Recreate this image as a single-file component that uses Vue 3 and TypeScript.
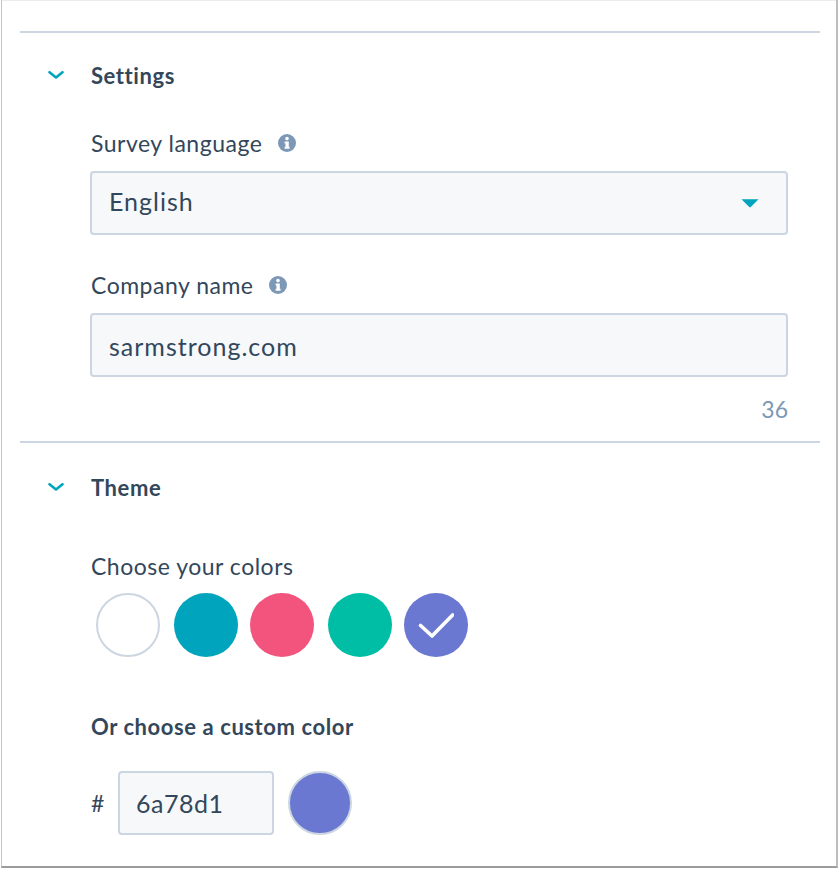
<script setup lang="ts">
const swatches: { color: string; outlined?: boolean; selected?: boolean }[] = [
  { color: '#ffffff', outlined: true },
  { color: '#00a4bd' },
  { color: '#f2547d' },
  { color: '#00bda5' },
  { color: '#6a78d1', selected: true },
]
</script>

<template>
  <div class="window">
    <section class="section first">
      <header class="head">
        <svg class="chevron" viewBox="0 0 16 8" width="16" height="8"><path d="M1.5 1.2 8 6.4l6.5-5.2" fill="none" stroke="#00a4bd" stroke-width="2.6" stroke-linecap="round" stroke-linejoin="round"/></svg>
        <span class="title">Settings</span>
      </header>
      <div class="body">
        <div class="label">
          <span>Survey language</span>
          <svg class="info" viewBox="0 0 18 18" width="18" height="18"><circle cx="9" cy="9" r="9" fill="#7c98b6"/><circle cx="9" cy="4.6" r="1.8" fill="#fff"/><path d="M6.6 7.4H10.8V12.8H11.6V14.8H6.6V12.8H7.5V9.4H6.6Z" fill="#fff"/></svg>
        </div>
        <div class="field select">
          <span class="select-value">English</span>
          <svg class="caret" viewBox="0 0 18 9" width="18" height="9"><path d="M0.5 0.2H17.5L10 7.8Q9 8.8 8 7.8Z" fill="#00a4bd"/></svg>
        </div>
        <div class="label second">
          <span>Company name</span>
          <svg class="info" viewBox="0 0 18 18" width="18" height="18"><circle cx="9" cy="9" r="9" fill="#7c98b6"/><circle cx="9" cy="4.6" r="1.8" fill="#fff"/><path d="M6.6 7.4H10.8V12.8H11.6V14.8H6.6V12.8H7.5V9.4H6.6Z" fill="#fff"/></svg>
        </div>
        <div class="field company"><span>sarmstrong.com</span></div>
        <div class="count">36</div>
      </div>
    </section>

    <section class="section theme">
      <header class="head">
        <svg class="chevron" viewBox="0 0 16 8" width="16" height="8"><path d="M1.5 1.2 8 6.4l6.5-5.2" fill="none" stroke="#00a4bd" stroke-width="2.6" stroke-linecap="round" stroke-linejoin="round"/></svg>
        <span class="title">Theme</span>
      </header>
      <div class="body">
        <div class="label colors-label">Choose your colors</div>
        <div class="swatches">
          <div
            v-for="s in swatches"
            :key="s.color"
            class="swatch"
            :class="{ outlined: s.outlined }"
            :style="{ backgroundColor: s.color }"
          >
            <svg v-if="s.selected" viewBox="0 0 36 26" width="36" height="26"><path d="M2.6 13.5 14 24 34.6 3" fill="none" stroke="#fff" stroke-width="3.6" stroke-linecap="round" stroke-linejoin="round"/></svg>
          </div>
        </div>
        <div class="label custom">Or choose a custom color</div>
        <div class="custom-row">
          <span class="hash">#</span>
          <div class="field hex">6a78d1</div>
          <div class="preview"></div>
        </div>
      </div>
    </section>
  </div>
</template>

<style>
html, body { margin: 0; background: #fff; }
</style>

<style scoped>
.window {
  box-sizing: border-box;
  width: 837px;
  height: 868px;
  margin-left: 1px;
  padding: 31px 16px 0 18px;
  border-left: 1px solid #c4c4c4;
  border-right: 2px solid #bdbdbd;
  border-bottom: 2px solid #9c9c9c;
  box-shadow: inset 0 1px 0 #ececec;
  font-family: Lato, "Open Sans", sans-serif;
  font-size: 23px;
  letter-spacing: 0.5px;
  color: #33475b;
  background: #fff;
}
.section {
  border-top: 2px solid #cbd6e2;
}
.first {
  height: 408px;
}
.head {
  display: flex;
  align-items: center;
  height: 84px;
  padding-left: 28px;
}
.theme .head {
  height: 88px;
}
.chevron {
  width: 16px;
}
.title {
  margin-left: 27px;
  font-size: 22px;
  letter-spacing: 0.58px;
  font-weight: 700;
}
.body {
  padding-left: 70px;
  width: 698px;
}
.label {
  display: flex;
  align-items: center;
  gap: 16px;
  height: 28px;
  padding-left: 1px;
}
.first .label:first-child {
  margin-top: 12px;
}
.second {
  margin-top: 36px;
}
.field {
  box-sizing: border-box;
  height: 64px;
  margin-top: 14px;
  padding: 0 17px;
  display: flex;
  align-items: center;
  font-size: 25px;
  letter-spacing: 1px;
  background: #f6f8fa;
  border: 2px solid #cbd6e2;
  border-radius: 4px;
}
.select {
  justify-content: space-between;
  padding-right: 27px;
}
.select-value {
  margin-top: -4px;
}
.company span {
  margin-top: 2px;
}
.caret {
  margin-top: 1px;
}
.count {
  margin-top: 20px;
  height: 24px;
  line-height: 24px;
  text-align: right;
  letter-spacing: 0;
  color: #7c98b6;
}
.colors-label {
  margin-top: 21px;
}
.swatches {
  display: flex;
  gap: 12px;
  margin-top: 13px;
  padding-left: 6px;
}
.swatch {
  box-sizing: border-box;
  width: 64px;
  height: 64px;
  border-radius: 50%;
  display: flex;
  align-items: center;
  justify-content: center;
}
.swatch:nth-child(even) {
  margin-left: 2px;
}
.outlined {
  border: 2px solid #cbd6e2;
}
.custom {
  margin-top: 55px;
  font-size: 22px;
  letter-spacing: 0.58px;
  font-weight: 700;
}
.custom-row {
  display: flex;
  align-items: center;
  margin-top: 31px;
}
.hash {
  width: 27px;
  padding-left: 1px;
}
.hex {
  width: 156px;
  margin-top: 0;
  padding: 0 16px;
  letter-spacing: 0.5px;
}
.preview {
  box-sizing: border-box;
  width: 64px;
  height: 64px;
  margin-left: 14px;
  border-radius: 50%;
  background: #6a78d1;
  border: 2px solid #cbd6e2;
}
</style>
